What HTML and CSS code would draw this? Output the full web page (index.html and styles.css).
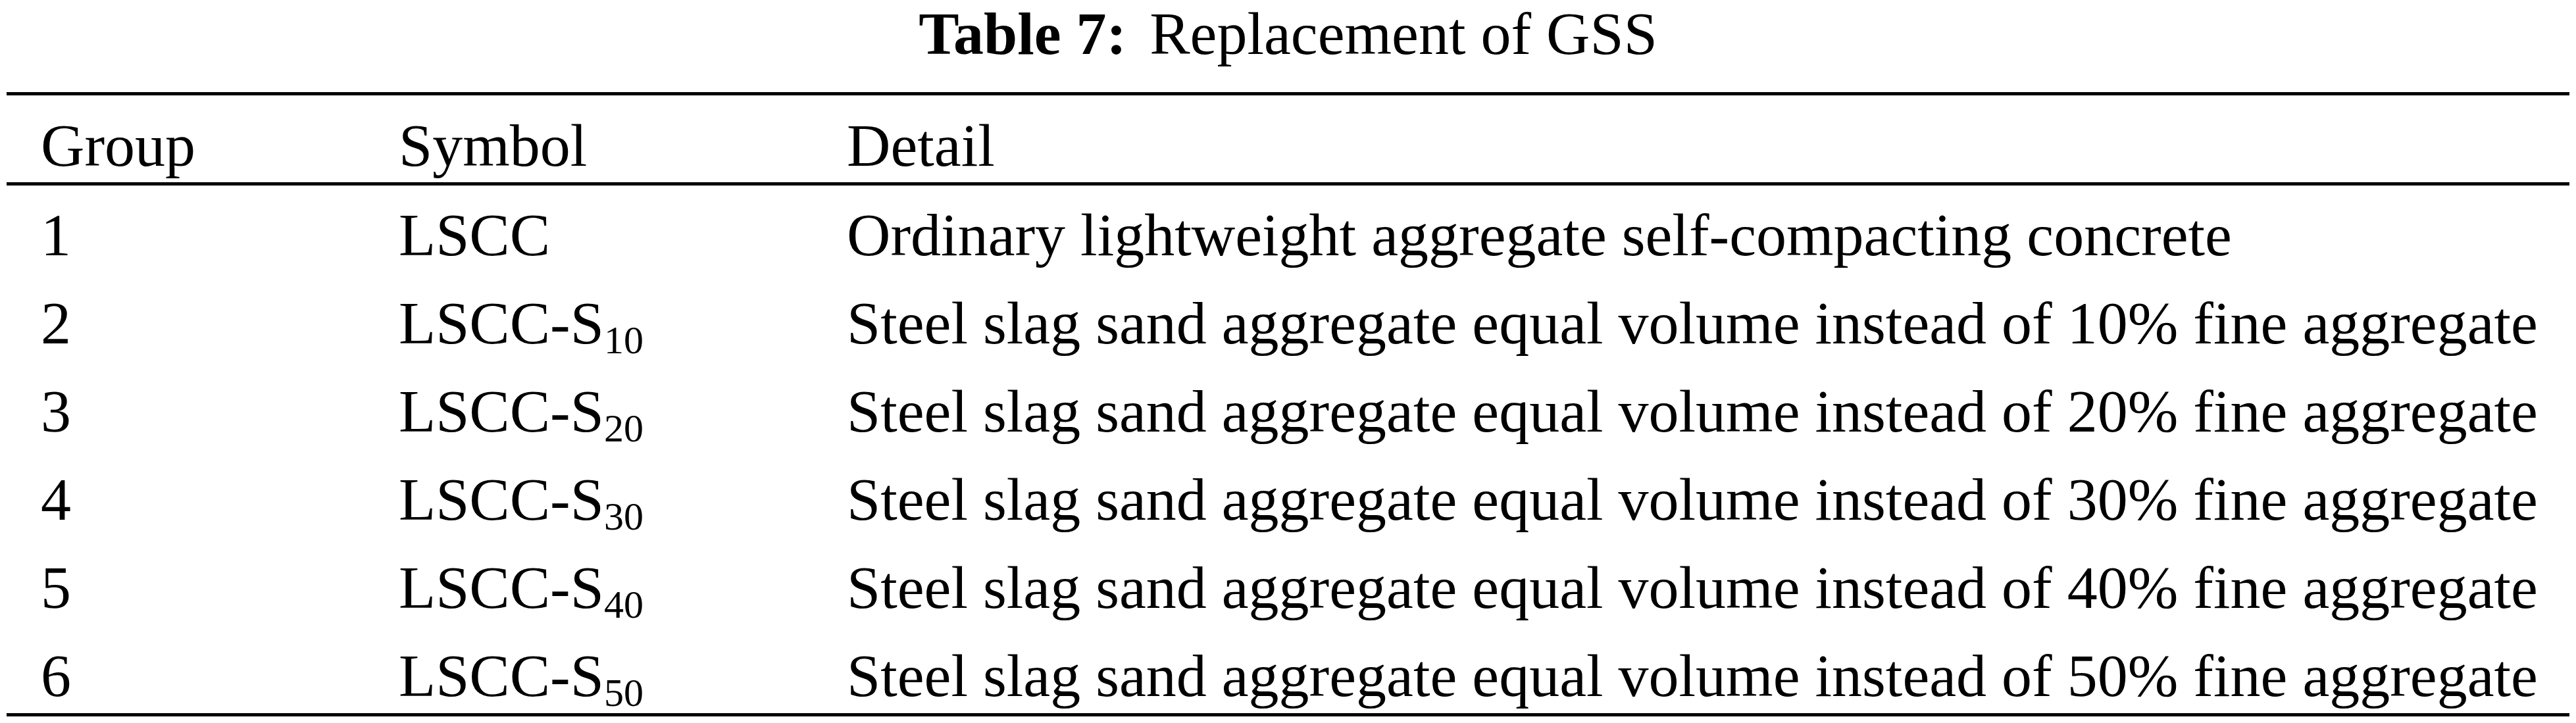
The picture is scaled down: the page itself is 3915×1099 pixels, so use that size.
FILE: index.html
```html
<!DOCTYPE html>
<html lang="en">
<head>
<meta charset="utf-8">
<title>Table 7: Replacement of GSS</title>
<link rel="stylesheet" href="styles.css">
</head>
<body>
<div class="page">
  <div class="caption"><span class="label">Table 7:</span> Replacement of GSS</div>
  <table class="data">
    <thead>
      <tr>
        <th class="c-group">Group</th>
        <th class="c-symbol">Symbol</th>
        <th class="c-detail">Detail</th>
      </tr>
    </thead>
    <tbody>
      <tr>
        <td>1</td>
        <td>LSCC</td>
        <td>Ordinary lightweight aggregate self-compacting concrete</td>
      </tr>
      <tr>
        <td>2</td>
        <td>LSCC-S<span class="sub">10</span></td>
        <td>Steel slag sand aggregate equal volume instead of 10% fine aggregate</td>
      </tr>
      <tr>
        <td>3</td>
        <td>LSCC-S<span class="sub">20</span></td>
        <td>Steel slag sand aggregate equal volume instead of 20% fine aggregate</td>
      </tr>
      <tr>
        <td>4</td>
        <td>LSCC-S<span class="sub">30</span></td>
        <td>Steel slag sand aggregate equal volume instead of 30% fine aggregate</td>
      </tr>
      <tr>
        <td>5</td>
        <td>LSCC-S<span class="sub">40</span></td>
        <td>Steel slag sand aggregate equal volume instead of 40% fine aggregate</td>
      </tr>
      <tr>
        <td>6</td>
        <td>LSCC-S<span class="sub">50</span></td>
        <td>Steel slag sand aggregate equal volume instead of 50% fine aggregate</td>
      </tr>
    </tbody>
  </table>
</div>
</body>
</html>
```
FILE: styles.css
```css
html, body {
  margin: 0;
  padding: 0;
  background: #ffffff;
}

body {
  font-family: "Liberation Serif", "Times New Roman", serif;
  font-size: 92px;
  color: #000000;
}

.page {
  padding: 0 10px;
}

.caption {
  text-align: center;
  line-height: 102px;
  height: 102px;
  margin-bottom: 38px;
  white-space: nowrap;
}

.caption .label {
  font-weight: bold;
  margin-right: 12px;
}

.data {
  width: 100%;
  border-collapse: separate;
  border-spacing: 0;
  table-layout: fixed;
}

.data th,
.data td {
  box-sizing: border-box;
  text-align: left;
  font-weight: normal;
  white-space: nowrap;
  padding: 0;
  vertical-align: baseline;
}

.data th {
  border-top: 5px solid #000;
  border-bottom: 5px solid #000;
  padding-top: 20px;
  line-height: 112px;
}

.data td {
  padding-top: 18px;
  padding-bottom: 2px;
  line-height: 114px;
}

.data tbody tr:last-child td {
  padding-bottom: 0;
  border-bottom: 5px solid #000;
}

.data .c-group {
  width: 596px;
}

.data .c-symbol {
  width: 681px;
}

.data th:first-child,
.data td:first-child {
  padding-left: 52px;
}

.sub {
  font-size: 60px;
  line-height: 0;
  vertical-align: -15px;
}
```
